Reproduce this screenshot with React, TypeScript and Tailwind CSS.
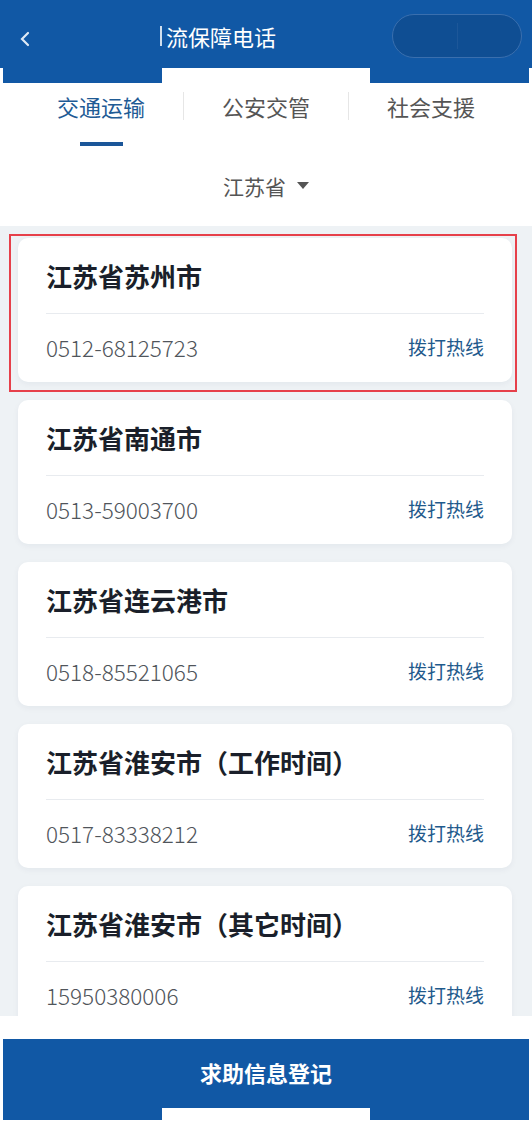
import { Fragment } from 'react';

const hotlines = [
  { name: '江苏省苏州市', phone: '0512-68125723', marked: true },
  { name: '江苏省南通市', phone: '0513-59003700' },
  { name: '江苏省连云港市', phone: '0518-85521065' },
  { name: '江苏省淮安市（工作时间）', phone: '0517-83338212' },
  { name: '江苏省淮安市（其它时间）', phone: '15950380006' },
];

const tabs = ['交通运输', '公安交管', '社会支援'];

const font = { fontFamily: '"Noto Sans CJK SC", "Noto Sans", sans-serif' };

function NotchRow({ height }: { height: string }) {
  return (
    <div className={`flex ${height}`}>
      <div className="w-[3px] bg-white" />
      <div className="w-[159px] bg-[#1158a5]" />
      <div className="w-[208px] bg-white" />
      <div className="w-[159px] bg-[#1158a5]" />
      <div className="flex-1 bg-white" />
    </div>
  );
}

function HotlineCard({ name, phone, marked }: { name: string; phone: string; marked?: boolean }) {
  return (
    <div className="relative h-[144px] shrink-0 rounded-[10px] bg-white px-[28px] shadow-[0_2px_6px_rgba(20,40,70,0.05)]">
      <div className="border-b border-[#e8ebef] pt-[23px] pb-[22px]">
        <h3 className="text-[26px] leading-[30px] font-bold text-[#1a1f2a]">{name}</h3>
      </div>
      <div className="flex items-center justify-between pt-[19px]">
        <span className="text-[22.5px] leading-[28px] font-light text-[#50555b]">{phone}</span>
        <span className="text-[19px] leading-[28px] text-[#1f5a8c]">拨打热线</span>
      </div>
      {marked && (
        <div className="pointer-events-none absolute -top-[4px] -bottom-[10px] -left-[9px] -right-[5px] border-2 border-[#e6404a]" />
      )}
    </div>
  );
}

export default function App() {
  return (
    <div className="flex h-[1122px] w-[532px] flex-col overflow-hidden bg-white" style={font}>
      {/* 顶部导航 */}
      <div className="relative flex h-[68px] items-center bg-[#1158a5]">
        <svg className="absolute left-[19px] top-[31px]" width="12" height="16" viewBox="0 0 12 16">
          <polyline points="9,2 3,8 9,14" fill="none" stroke="#dfe9f5" strokeWidth="2.2" strokeLinecap="round" />
        </svg>
        <div className="absolute left-[160px] top-[25px] flex items-center">
          <span className="h-[20px] w-[2px] bg-white/80" />
          <span className="ml-[4px] text-[22px] leading-[22px] text-white">流保障电话</span>
        </div>
        <div className="absolute left-[392px] top-[14px] flex h-[44px] w-[130px] items-center justify-center rounded-full border border-[#3a6fae] bg-[#0f4e93]">
          <span className="h-[26px] w-px bg-[#1d5799]" />
        </div>
      </div>
      <NotchRow height="h-[15px]" />

      {/* 分类标签 */}
      <div className="flex px-[19px] pt-[9px]">
        {tabs.map((t, i) => (
          <Fragment key={t}>
            {i > 0 && <div className="h-[28px] w-px bg-[#e6e6e6]" />}
            <div className="flex flex-1 flex-col items-center">
              <span className={`text-[22px] leading-[28px] ${i === 0 ? 'text-[#1f5b95]' : 'text-[#555555]'}`}>{t}</span>
              <span className={`mt-[22px] h-[4px] w-[43px] ${i === 0 ? 'bg-[#1b5699]' : 'bg-transparent'}`} />
            </div>
          </Fragment>
        ))}
      </div>
      <div className="mt-[25px] flex items-center justify-center pb-[25px]">
        <span className="text-[21px] leading-[30px] text-[#555555]">江苏省</span>
        <svg className="ml-[11px]" width="12" height="8" viewBox="0 0 12 8">
          <polygon points="0,0 12,0 6,7" fill="#555555" />
        </svg>
      </div>

      {/* 热线列表 */}
      <div className="flex flex-1 flex-col gap-[18px] overflow-hidden bg-[#eef2f5] pt-[12px] pl-[18px] pr-[20px]">
        {hotlines.map((h) => (
          <HotlineCard key={h.name} {...h} />
        ))}
      </div>

      {/* 底部按钮 */}
      <div className="bg-white pt-[23px] pb-[2px]">
        <div className="mx-[3px] flex h-[69px] items-center justify-center bg-[#1158a5] pb-[3px]">
          <span className="text-[22px] font-bold text-white">求助信息登记</span>
        </div>
        <NotchRow height="h-[12px]" />
      </div>
    </div>
  );
}
